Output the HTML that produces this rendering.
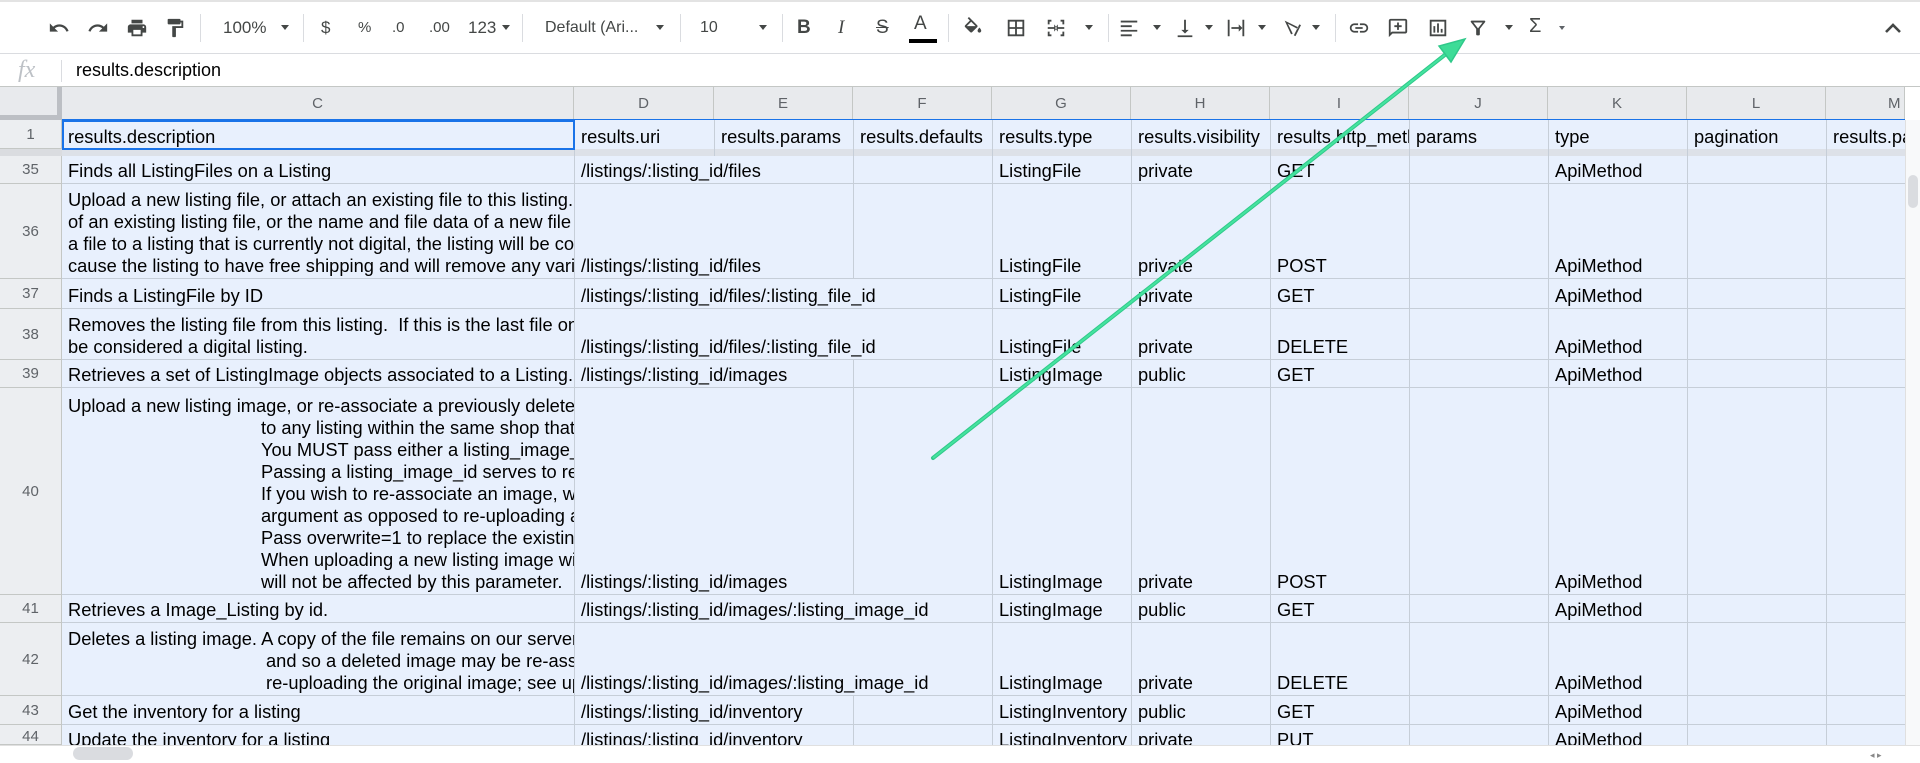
<!DOCTYPE html>
<html><head><meta charset="utf-8"><style>
*{margin:0;padding:0;box-sizing:border-box}
body{width:1920px;height:763px;overflow:hidden;background:#fff;font-family:"Liberation Sans",Arial,sans-serif;position:relative;color:#000}
.a{position:absolute}
.ic{position:absolute;top:17px;width:22px;height:22px}
.ic path{fill:#444746}
.sep{position:absolute;top:14px;width:1px;height:28px;background:#dadce0}
.dd{position:absolute;top:25px;width:0;height:0;border-left:4px solid transparent;border-right:4px solid transparent;border-top:5px solid #444746}
.tt{position:absolute;top:16px;font-size:17px;color:#444746;line-height:24px}
.ch{position:absolute;top:87px;height:33px;line-height:33px;text-align:center;font-size:15px;color:#5f6368;background:#e8eaed;border-right:1px solid #c4c7c5}
.rh{position:absolute;left:0;width:62px;text-align:center;font-size:15px;color:#5f6368;background:#eceef1;border-bottom:1px solid #c4c7c5;border-right:1px solid #c4c7c5;display:flex;align-items:center;justify-content:center}
.c{position:absolute;font-size:18.3px;line-height:22px;white-space:pre;overflow:hidden;padding:0 0 1px 6px;display:flex;flex-direction:column;justify-content:flex-end;background:#e8f0fd}
.hl{position:absolute;left:62px;width:1843px;height:1px;background:#c6ced8}
.vl{position:absolute;width:1px;background:#c6ced8;top:120px;height:625px}
</style></head><body>
<div class="a" style="left:0;top:0;width:1920px;height:2px;background:#e3e3e3"></div>
<div class="a" style="left:0;top:53px;width:1920px;height:1px;background:#dadce0"></div>
<svg class="ic" style="left:48px" viewBox="0 0 24 24"><path d="M12.5 8c-2.65 0-5.050.99-6.9 2.6L2 7v9h9l-3.62-3.62c1.39-1.16 3.160-1.88 5.12-1.88 3.54 0 6.55 2.31 7.6 5.5l2.37-.78C21.08 11.03 17.15 8 12.5 8z"/></svg>
<svg class="ic" style="left:87px" viewBox="0 0 24 24"><path d="M18.4 10.6C16.55 8.99 14.15 8 11.5 8c-4.65 0-8.58 3.03-9.96 7.22L3.9 16c1.05-3.19 4.05-5.5 7.6-5.5 1.95 0 3.73.72 5.12 1.88L13 16h9V7l-3.6 3.6z"/></svg>
<svg class="ic" style="left:126px" viewBox="0 0 24 24"><path d="M19 8H5c-1.66 0-3 1.34-3 3v6h4v4h12v-4h4v-6c0-1.66-1.34-3-3-3zm-3 11H8v-5h8v5zm3-7c-.55 0-1-.45-1-1s.45-1 1-1 1 .45 1 1-.45 1-1 1zm-1-9H6v4h12V3z"/></svg>
<svg class="ic" style="left:164px" viewBox="0 0 24 24"><path d="M18 4V3c0-.55-.45-1-1-1H5c-.55 0-1 .45-1 1v4c0 .55.45 1 1 1h12c.55 0 1-.45 1-1V6h1v4H9v11c0 .55.45 1 1 1h2c.55 0 1-.45 1-1v-9h8V4h-3z"/></svg>
<div class="sep" style="left:200px"></div>
<div class="tt" style="left:223px">100%</div><div class="dd" style="left:281px"></div>
<div class="sep" style="left:303px"></div>
<div class="tt" style="left:321px">$</div>
<div class="tt" style="left:358px;font-size:15px">%</div>
<div class="tt" style="left:392px;font-size:15px">.0</div>
<div class="tt" style="left:429px;font-size:15px">.00</div>
<div class="tt" style="left:468px">123</div><div class="dd" style="left:502px"></div>
<div class="sep" style="left:522px"></div>
<div class="tt" style="left:545px;font-size:16px">Default (Ari...</div><div class="dd" style="left:656px"></div>
<div class="sep" style="left:680px"></div>
<div class="tt" style="left:700px;font-size:16px">10</div><div class="dd" style="left:759px"></div>
<div class="sep" style="left:782px"></div>
<div class="tt" style="left:797px;font-weight:bold;font-size:19px">B</div>
<div class="tt" style="left:838px;font-style:italic;font-size:19px;font-family:'Liberation Serif',serif">I</div>
<div class="tt" style="left:876px;font-size:19px;text-decoration:line-through">S</div>
<div class="tt" style="left:914px;font-size:19px;top:12px">A</div>
<div class="a" style="left:909px;top:39px;width:28px;height:4px;background:#000"></div>
<div class="sep" style="left:948px"></div>
<svg class="ic" style="left:962px" viewBox="0 0 24 24"><path d="M16.56 8.94L7.62 0 6.21 1.41l2.38 2.38-5.15 5.15c-.59.59-.59 1.54 0 2.12l5.5 5.5c.29.29.68.44 1.06.44s.77-.15 1.06-.44l5.5-5.5c.59-.58.59-1.53 0-2.12zM5.21 10L10 5.21 14.79 10H5.21zM19 11.5s-2 2.17-2 3.5c0 1.1.9 2 2 2s2-.9 2-2c0-1.33-2-3.5-2-3.5z"/></svg>
<svg class="ic" style="left:1005px" viewBox="0 0 24 24"><path d="M3 3v18h18V3H3zm8 16H5v-6h6v6zm0-8H5V5h6v6zm8 8h-6v-6h6v6zm0-8h-6V5h6v6z"/></svg>
<svg class="ic" style="left:1045px" viewBox="0 0 24 24"><path d="M3 3h4v2H5v3H3zM17 3h4v5h-2V5h-2zM3 16h2v3h2v2H3zM19 16h2v5h-4v-2h2zM3 11h7V8l3 4-3 4v-3H3zM21 11h-7V8l-3 4 3 4v-3h7z"/></svg>
<div class="dd" style="left:1085px"></div>
<div class="sep" style="left:1108px"></div>
<svg class="ic" style="left:1118px" viewBox="0 0 24 24"><path d="M3 4h18v2H3zM3 9h12v2H3zM3 14h18v2H3zM3 19h12v2H3z"/></svg>
<div class="dd" style="left:1153px"></div>
<svg class="ic" style="left:1174px" viewBox="0 0 24 24"><path d="M4 20h16v2H4zM11 3h2v11h3l-4 4-4-4h3z"/></svg>
<div class="dd" style="left:1205px"></div>
<svg class="ic" style="left:1225px" viewBox="0 0 24 24"><path d="M3 3h2v18H3zM19 3h2v18h-2zM7 11h8V8l4 4-4 4v-3H7z"/></svg>
<div class="dd" style="left:1258px"></div>
<svg class="ic" style="left:1281px" viewBox="0 0 24 24"><path d="M4 4l7 15 1.8-.9L7.5 7.3 18 13l1-1.7zM14 20l6-12 1.8.9-6 12z"/></svg>
<div class="dd" style="left:1312px"></div>
<div class="sep" style="left:1335px"></div>
<svg class="ic" style="left:1348px" viewBox="0 0 24 24"><path d="M3.9 12c0-1.71 1.39-3.1 3.1-3.1h4V7H7c-2.76 0-5 2.24-5 5s2.24 5 5 5h4v-1.9H7c-1.71 0-3.1-1.39-3.1-3.1zM8 13h8v-2H8v2zm9-6h-4v1.9h4c1.71 0 3.1 1.39 3.1 3.1s-1.39 3.1-3.1 3.1h-4V17h4c2.76 0 5-2.24 5-5s-2.24-5-5-5z"/></svg>
<svg class="ic" style="left:1387px" viewBox="0 0 24 24"><path d="M4 2h16c1.1 0 2 .9 2 2v12c0 1.1-.9 2-2 2H6l-4 4V4c0-1.1.9-2 2-2zm0 2v13.2L5.2 16H20V4zm7 2h2v3h3v2h-3v3h-2v-3H8V9h3z"/></svg>
<svg class="ic" style="left:1427px" viewBox="0 0 24 24"><path d="M3 3h18v18H3zm2 2v14h14V5zm2 5h2v7H7zm4-3h2v10h-2zm4 6h2v4h-2z"/></svg>
<svg class="ic" style="left:1467px" viewBox="0 0 24 24"><path d="M4.250 5.61C6.27 8.2 10 13 10 13v6c0 .55.45 1 1 1h2c.55 0 1-.45 1-1v-6s3.72-4.8 5.74-7.39A.998.998 0 0 0 18.95 4H5.04c-.83 0-1.3.95-.79 1.61zM7 6h10l-5 6.4z"/></svg>
<div class="dd" style="left:1505px"></div>
<div class="tt" style="left:1529px;font-size:20px;top:14px">Σ</div>
<div class="a" style="left:1559px;top:26px;border-left:3px solid transparent;border-right:3px solid transparent;border-top:4px solid #5f6368"></div>
<svg class="a" style="left:1884px;top:21px" width="18" height="14" viewBox="0 0 18 14"><path d="M2 11L9 4l7 7" stroke="#444746" stroke-width="2.6" fill="none"/></svg>
<div class="a" style="left:18px;top:54px;font-family:'Liberation Serif',serif;font-style:italic;font-size:24px;color:#bdc1c6;line-height:32px">fx</div>
<div class="a" style="left:61px;top:60px;width:1px;height:22px;background:#dadce0"></div>
<div class="a" style="left:76px;top:59px;font-size:18px;line-height:22px">results.description</div>
<div class="a" style="left:0;top:86px;width:1920px;height:1px;background:#c4c7c5"></div>
<div class="a" style="left:0;top:87px;width:62px;height:33px;background:#e8eaed;border-right:5px solid #bcbfc4;border-bottom:5px solid #bcbfc4"></div>
<div class="ch" style="left:62px;width:512px">C</div>
<div class="ch" style="left:574px;width:140px">D</div>
<div class="ch" style="left:714px;width:139px">E</div>
<div class="ch" style="left:853px;width:139px">F</div>
<div class="ch" style="left:992px;width:139px">G</div>
<div class="ch" style="left:1131px;width:139px">H</div>
<div class="ch" style="left:1270px;width:139px">I</div>
<div class="ch" style="left:1409px;width:139px">J</div>
<div class="ch" style="left:1548px;width:139px">K</div>
<div class="ch" style="left:1687px;width:139px">L</div>
<div class="ch" style="left:1826px;width:79px;text-align:left;padding-left:62px">M</div>
<div class="a" style="left:62px;top:120px;width:1843px;height:625px;background:#e8f0fd"></div>
<div class="a" style="left:62px;top:119px;width:1843px;height:2px;background:#1a73e8"></div>
<div class="a" style="left:62px;top:149px;width:1843px;height:7px;background:#dde1e8"></div>
<div class="a" style="left:0;top:149px;width:62px;height:7px;background:#dadce0"></div>
<div class="vl" style="left:574px"></div><div class="vl" style="left:714px"></div><div class="vl" style="left:853px"></div><div class="vl" style="left:992px"></div><div class="vl" style="left:1131px"></div><div class="vl" style="left:1270px"></div><div class="vl" style="left:1409px"></div><div class="vl" style="left:1548px"></div><div class="vl" style="left:1687px"></div><div class="vl" style="left:1826px"></div>
<div class="hl" style="top:183px"></div><div class="hl" style="top:278px"></div><div class="hl" style="top:308px"></div><div class="hl" style="top:359px"></div><div class="hl" style="top:387px"></div><div class="hl" style="top:594px"></div><div class="hl" style="top:622px"></div><div class="hl" style="top:695px"></div><div class="hl" style="top:724px"></div>
<div class="rh" style="top:120px;height:29px">1</div>
<div class="rh" style="top:156px;height:28px">35</div>
<div class="rh" style="top:184px;height:95px">36</div>
<div class="rh" style="top:279px;height:30px">37</div>
<div class="rh" style="top:309px;height:51px">38</div>
<div class="rh" style="top:360px;height:28px">39</div>
<div class="rh" style="top:388px;height:207px">40</div>
<div class="rh" style="top:595px;height:28px">41</div>
<div class="rh" style="top:623px;height:73px">42</div>
<div class="rh" style="top:696px;height:29px">43</div>
<div class="rh" style="top:725px;height:20px;align-items:flex-start;padding-top:3px">44</div>
<!-- row 1 -->
<div class="c" style="left:62px;top:120px;width:512px;height:29px">results.description</div>
<div class="c" style="left:575px;top:120px;width:139px;height:29px">results.uri</div>
<div class="c" style="left:715px;top:120px;width:138px;height:29px">results.params</div>
<div class="c" style="left:854px;top:120px;width:138px;height:29px">results.defaults</div>
<div class="c" style="left:993px;top:120px;width:138px;height:29px">results.type</div>
<div class="c" style="left:1132px;top:120px;width:138px;height:29px">results.visibility</div>
<div class="c" style="left:1271px;top:120px;width:138px;height:29px">results.http_method</div>
<div class="c" style="left:1410px;top:120px;width:138px;height:29px">params</div>
<div class="c" style="left:1549px;top:120px;width:138px;height:29px">type</div>
<div class="c" style="left:1688px;top:120px;width:138px;height:29px">pagination</div>
<div class="c" style="left:1827px;top:120px;width:78px;height:29px">results.params</div>
<div class="a" style="left:62px;top:120px;width:513px;height:30px;border:2px solid #1a73e8"></div>
<!-- rows -->
<div class="c" style="left:62px;top:156px;width:512px;height:27px">Finds all ListingFiles on a Listing</div>
<div class="c" style="left:575px;top:156px;width:278px;height:27px">/listings/:listing_id/files</div>
<div class="c" style="left:993px;top:156px;width:138px;height:27px">ListingFile</div>
<div class="c" style="left:1132px;top:156px;width:138px;height:27px">private</div>
<div class="c" style="left:1271px;top:156px;width:138px;height:27px">GET</div>
<div class="c" style="left:1549px;top:156px;width:138px;height:27px">ApiMethod</div>

<div class="c" style="left:62px;top:184px;width:512px;height:94px"><div>Upload a new listing file, or attach an existing file to this listing. You must</div><div>of an existing listing file, or the name and file data of a new file</div><div>a file to a listing that is currently not digital, the listing will be converted</div><div>cause the listing to have free shipping and will remove any variations</div></div>
<div class="c" style="left:575px;top:184px;width:278px;height:94px">/listings/:listing_id/files</div>
<div class="c" style="left:993px;top:184px;width:138px;height:94px">ListingFile</div>
<div class="c" style="left:1132px;top:184px;width:138px;height:94px">private</div>
<div class="c" style="left:1271px;top:184px;width:138px;height:94px">POST</div>
<div class="c" style="left:1549px;top:184px;width:138px;height:94px">ApiMethod</div>

<div class="c" style="left:62px;top:279px;width:512px;height:29px">Finds a ListingFile by ID</div>
<div class="c" style="left:575px;top:279px;width:417px;height:29px">/listings/:listing_id/files/:listing_file_id</div>
<div class="c" style="left:993px;top:279px;width:138px;height:29px">ListingFile</div>
<div class="c" style="left:1132px;top:279px;width:138px;height:29px">private</div>
<div class="c" style="left:1271px;top:279px;width:138px;height:29px">GET</div>
<div class="c" style="left:1549px;top:279px;width:138px;height:29px">ApiMethod</div>

<div class="c" style="left:62px;top:309px;width:512px;height:50px"><div>Removes the listing file from this listing.  If this is the last file on a listing</div><div>be considered a digital listing.</div></div>
<div class="c" style="left:575px;top:309px;width:417px;height:50px">/listings/:listing_id/files/:listing_file_id</div>
<div class="c" style="left:993px;top:309px;width:138px;height:50px">ListingFile</div>
<div class="c" style="left:1132px;top:309px;width:138px;height:50px">private</div>
<div class="c" style="left:1271px;top:309px;width:138px;height:50px">DELETE</div>
<div class="c" style="left:1549px;top:309px;width:138px;height:50px">ApiMethod</div>

<div class="c" style="left:62px;top:360px;width:512px;height:27px">Retrieves a set of ListingImage objects associated to a Listing.</div>
<div class="c" style="left:575px;top:360px;width:278px;height:27px">/listings/:listing_id/images</div>
<div class="c" style="left:993px;top:360px;width:138px;height:27px">ListingImage</div>
<div class="c" style="left:1132px;top:360px;width:138px;height:27px">public</div>
<div class="c" style="left:1271px;top:360px;width:138px;height:27px">GET</div>
<div class="c" style="left:1549px;top:360px;width:138px;height:27px">ApiMethod</div>

<div class="c" style="left:62px;top:388px;width:512px;height:206px"><div>Upload a new listing image, or re-associate a previously deleted one</div><div style="padding-left:193px">to any listing within the same shop that is</div><div style="padding-left:193px">You MUST pass either a listing_image_id</div><div style="padding-left:193px">Passing a listing_image_id serves to re-associate</div><div style="padding-left:193px">If you wish to re-associate an image, we</div><div style="padding-left:193px">argument as opposed to re-uploading a</div><div style="padding-left:193px">Pass overwrite=1 to replace the existing</div><div style="padding-left:193px">When uploading a new listing image with</div><div style="padding-left:193px">will not be affected by this parameter.</div></div>
<div class="c" style="left:575px;top:388px;width:278px;height:206px">/listings/:listing_id/images</div>
<div class="c" style="left:993px;top:388px;width:138px;height:206px">ListingImage</div>
<div class="c" style="left:1132px;top:388px;width:138px;height:206px">private</div>
<div class="c" style="left:1271px;top:388px;width:138px;height:206px">POST</div>
<div class="c" style="left:1549px;top:388px;width:138px;height:206px">ApiMethod</div>

<div class="c" style="left:62px;top:595px;width:512px;height:27px">Retrieves a Image_Listing by id.</div>
<div class="c" style="left:575px;top:595px;width:417px;height:27px">/listings/:listing_id/images/:listing_image_id</div>
<div class="c" style="left:993px;top:595px;width:138px;height:27px">ListingImage</div>
<div class="c" style="left:1132px;top:595px;width:138px;height:27px">public</div>
<div class="c" style="left:1271px;top:595px;width:138px;height:27px">GET</div>
<div class="c" style="left:1549px;top:595px;width:138px;height:27px">ApiMethod</div>

<div class="c" style="left:62px;top:623px;width:512px;height:72px"><div>Deletes a listing image. A copy of the file remains on our servers</div><div style="padding-left:198px">and so a deleted image may be re-associated</div><div style="padding-left:198px">re-uploading the original image; see uploadListingImage</div></div>
<div class="c" style="left:575px;top:623px;width:417px;height:72px">/listings/:listing_id/images/:listing_image_id</div>
<div class="c" style="left:993px;top:623px;width:138px;height:72px">ListingImage</div>
<div class="c" style="left:1132px;top:623px;width:138px;height:72px">private</div>
<div class="c" style="left:1271px;top:623px;width:138px;height:72px">DELETE</div>
<div class="c" style="left:1549px;top:623px;width:138px;height:72px">ApiMethod</div>

<div class="c" style="left:62px;top:696px;width:512px;height:28px">Get the inventory for a listing</div>
<div class="c" style="left:575px;top:696px;width:278px;height:28px">/listings/:listing_id/inventory</div>
<div class="c" style="left:993px;top:696px;width:138px;height:28px">ListingInventory</div>
<div class="c" style="left:1132px;top:696px;width:138px;height:28px">public</div>
<div class="c" style="left:1271px;top:696px;width:138px;height:28px">GET</div>
<div class="c" style="left:1549px;top:696px;width:138px;height:28px">ApiMethod</div>

<div class="c" style="left:62px;top:725px;width:512px;height:20px;justify-content:flex-start;padding-top:4px">Update the inventory for a listing</div>
<div class="c" style="left:575px;top:725px;width:278px;height:20px;justify-content:flex-start;padding-top:4px">/listings/:listing_id/inventory</div>
<div class="c" style="left:993px;top:725px;width:138px;height:20px;justify-content:flex-start;padding-top:4px">ListingInventory</div>
<div class="c" style="left:1132px;top:725px;width:138px;height:20px;justify-content:flex-start;padding-top:4px">private</div>
<div class="c" style="left:1271px;top:725px;width:138px;height:20px;justify-content:flex-start;padding-top:4px">PUT</div>
<div class="c" style="left:1549px;top:725px;width:138px;height:20px;justify-content:flex-start;padding-top:4px">ApiMethod</div>
<div class="a" style="left:1905px;top:120px;width:15px;height:643px;background:#f8f9fa;border-left:1px solid #e0e0e0"></div>
<div class="a" style="left:1908px;top:175px;width:10px;height:33px;background:#dadce0;border-radius:5px"></div>
<div class="a" style="left:0;top:745px;width:1920px;height:18px;background:#fff;border-top:1px solid #e0e0e0"></div>
<div class="a" style="left:73px;top:747px;width:60px;height:13px;background:#dadce0;border-radius:7px"></div>
<div class="a" style="left:1870px;top:750px;font-size:9px;color:#888">◂ ▸</div>
<svg class="a" style="left:0;top:0" width="1920" height="763"><line x1="933" y1="458" x2="1446" y2="54" stroke="#2fc98a" stroke-width="4" stroke-linecap="round"/><line x1="933" y1="458" x2="1446" y2="54" stroke="#45e39f" stroke-width="2"/><polygon points="1465,39 1451,62 1439,46" fill="#3ddc97" stroke="#2fc98a" stroke-width="1.5"/></svg>
</body></html>
